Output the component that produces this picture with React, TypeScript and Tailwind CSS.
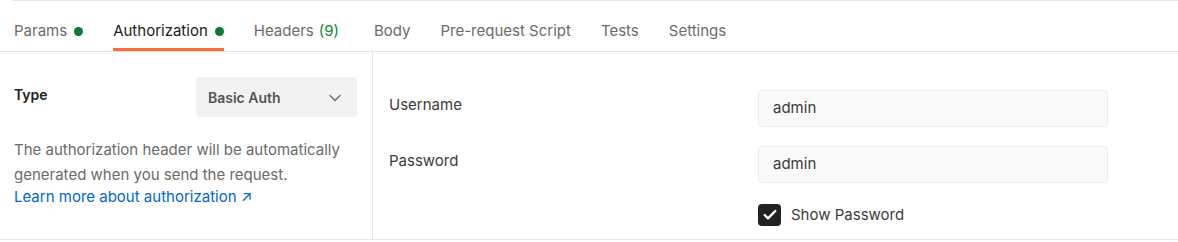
import { ChevronDown, Check } from 'lucide-react';

const tabs = [
  { label: 'Params', dot: true },
  { label: 'Authorization', dot: true, active: true },
  { label: 'Headers', count: 9 },
  { label: 'Body' },
  { label: 'Pre-request Script' },
  { label: 'Tests' },
  { label: 'Settings' },
];

export default function App() {
  return (
    <div className="w-[1178px] h-[242px] bg-white text-[15px] text-[#212121]" style={{ fontFamily: 'Inter, "Noto Sans", sans-serif' }}>
      <div className="ml-[12px] border-t border-[#e6e6e6]" />
      <div className="flex h-[51px] items-end gap-[30px] border-b border-[#e6e6e6] px-[14px]">
        {tabs.map((t) => (
          <div
            key={t.label}
            className={`flex h-[29px] items-start gap-[6px] border-b-[3px] ${t.active ? 'border-[#ff6c37] text-[#212121]' : 'border-transparent text-[#6b6b6b]'} ${t.count !== undefined ? 'pr-[5px]' : ''}`}
          >
            <span className="leading-[18px]">{t.label}</span>
            {t.count !== undefined && <span className="-ml-[1px] leading-[18px] text-[#0b8a3c]">({t.count})</span>}
            {t.dot && <span className="mt-[5px] ml-[1px] h-[9px] w-[9px] rounded-full bg-[#0b7a35]" />}
          </div>
        ))}
      </div>
      <div className="flex h-[188px] border-b border-[#e6e6e6]">
        <div className="w-[373px] shrink-0 border-r border-[#e6e6e6] pl-[14px] pr-[15px] pt-[25px]">
          <div className="flex items-start justify-between">
            <span className="mt-[7px] text-[14px] font-semibold text-[#212121]">Type</span>
            <div className="flex h-[40px] w-[161px] items-center justify-between rounded-[4px] bg-[#f2f2f2] pl-[12px] pr-[12px]">
              <span className="text-[14px] font-semibold text-[#555]">Basic Auth</span>
              <ChevronDown size={20} strokeWidth={1.5} className="mt-[2px] text-[#6b6b6b]" />
            </div>
          </div>
          <p className="mt-[20px] leading-[25px] text-[#6b6b6b]">
            The authorization header will be automatically generated when you send the request.
          </p>
          <a className="-mt-[1px] block leading-[22px] text-[#0265d2]">Learn more about authorization ↗</a>
        </div>
        <div className="flex flex-1 flex-col pl-[16px] pt-[38px]">
          <div className="flex items-start">
            <span className="mt-[4px] w-[369px] text-[#3b3b3b]">Username</span>
            <div className="flex h-[37px] w-[350px] items-center rounded-[4px] border border-[#ededed] bg-[#f9f9f9] px-[14px] text-[#3b3b3b]">admin</div>
          </div>
          <div className="mt-[19px] flex items-start">
            <span className="mt-[4px] w-[369px] text-[#3b3b3b]">Password</span>
            <div className="flex h-[37px] w-[350px] items-center rounded-[4px] border border-[#ededed] bg-[#f9f9f9] px-[14px] text-[#3b3b3b]">admin</div>
          </div>
          <div className="mt-[20px] ml-[369px] flex items-center gap-[10px]">
            <div className="flex h-[22px] w-[23px] items-center justify-center rounded-[4px] bg-[#212121]">
              <Check size={16} strokeWidth={3.5} className="text-white" />
            </div>
            <span className="mt-[1px] text-[#3b3b3b]">Show Password</span>
          </div>
        </div>
      </div>
    </div>
  );
}
